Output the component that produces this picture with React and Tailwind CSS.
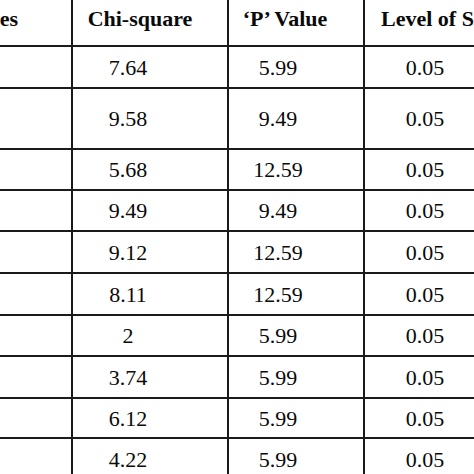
import React from "react";

const rows = [
  { h: "h-[42px]", chi: "7.64", p: "5.99", los: "0.05" },
  { h: "h-[61px]", chi: "9.58", p: "9.49", los: "0.05" },
  { h: "h-[41px]", chi: "5.68", p: "12.59", los: "0.05" },
  { h: "h-[41px]", chi: "9.49", p: "9.49", los: "0.05" },
  { h: "h-[42px]", chi: "9.12", p: "12.59", los: "0.05" },
  { h: "h-[42px]", chi: "8.11", p: "12.59", los: "0.05" },
  { h: "h-[41px]", chi: "2", p: "5.99", los: "0.05" },
  { h: "h-[42px]", chi: "3.74", p: "5.99", los: "0.05" },
  { h: "h-[40px]", chi: "6.12", p: "5.99", los: "0.05" },
  { h: "h-[42px]", chi: "4.22", p: "5.99", los: "0.05" },
];

function App() {
  return (
    <div
      className="w-[474px] h-[474px] overflow-hidden bg-white text-[#0a0a0a] text-[22px] leading-[25px]"
      style={{ fontFamily: '"Liberation Serif", "Times New Roman", serif' }}
    >
      <div className="w-[560px]">
        {/* header */}
        <div className="flex h-[47px] border-b-2 border-[#1a1a1a] font-bold">
          <div className="w-[73px] shrink-0 border-r-2 border-[#1a1a1a] pt-[6px]">
            <div className="flex justify-end w-[18px] whitespace-nowrap">
              <span>Variables</span>
            </div>
          </div>
          <div className="w-[156px] shrink-0 border-r-2 border-[#1a1a1a] pt-[6px] pr-[20px] text-center whitespace-nowrap">
            Chi-square
          </div>
          <div className="w-[136px] shrink-0 border-r-2 border-[#1a1a1a] pt-[6px] pr-[22px] text-center whitespace-nowrap">
            ‘P’ Value
          </div>
          <div className="flex-1 pt-[6px] pl-[16px] whitespace-nowrap">
            Level of Significance
          </div>
        </div>

        {rows.map((r, i) => (
          <div key={i} className={`flex ${r.h} border-b-2 border-[#1a1a1a]`}>
            <div className="w-[73px] shrink-0 border-r-2 border-[#1a1a1a]" />
            <div className="w-[156px] shrink-0 border-r-2 border-[#1a1a1a] pr-[44px] flex items-center justify-center">
              {r.chi}
            </div>
            <div className="w-[136px] shrink-0 border-r-2 border-[#1a1a1a] pr-[36px] flex items-center justify-center">
              {r.p}
            </div>
            <div className="w-[122px] shrink-0 border-r-2 border-[#1a1a1a] flex items-center justify-center">
              {r.los}
            </div>
          </div>
        ))}
      </div>
    </div>
  );
}

export default App;
